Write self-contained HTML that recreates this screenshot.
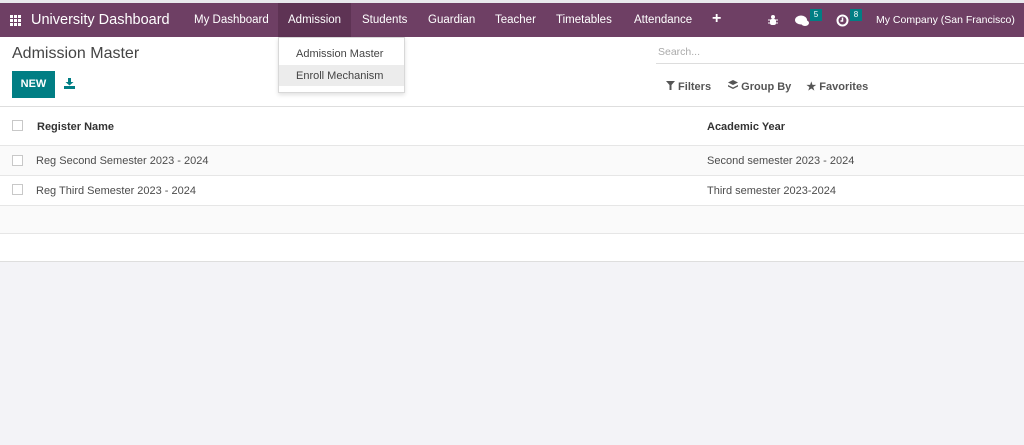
<!DOCTYPE html>
<html><head><meta charset="utf-8"><style>
*{box-sizing:border-box;margin:0;padding:0}
body{width:1024px;height:445px;overflow:hidden;background:#f3f3f7;font-family:"Liberation Sans",sans-serif;color:#4c4c4c;position:relative}
.top{position:absolute;left:0;top:0;width:1024px;height:3px;background:#e8e8ec}
.nav{position:absolute;left:0;top:3px;width:1024px;height:34px;background:#6e3f64;color:#fff;font-size:11.5px}
.nav span{position:absolute;top:10px;white-space:nowrap}
.act{position:absolute;left:278px;top:0;width:73px;height:34px;background:#5e3354}
.white{position:absolute;left:0;top:37px;width:1024px;height:225px;background:#fff;border-bottom:1px solid #dedede}
.abs{position:absolute;white-space:nowrap}
.row{position:absolute;left:0;width:1024px;border-bottom:1px solid #e6e6e6}
.cb{position:absolute;left:12px;width:11px;height:11px;border:1px solid #c8c8c8;background:#fff}
.dd{position:absolute;left:278px;top:37px;width:127px;height:56px;background:#fff;border:1px solid #d8d8d8;box-shadow:0 2px 4px rgba(0,0,0,.12);font-size:11px;color:#444}
.badge{position:absolute;background:#017e84;color:#fff;font-size:8px;width:12px;height:12px;text-align:center;line-height:12px;top:6px}
.t{font-size:11px}
</style></head><body>
<div class="top"></div>
<div class="nav">
<div class="act"></div>
<svg class="abs" style="left:10px;top:12px" width="11" height="11" viewBox="0 0 11 11" fill="#fff"><rect x="0" y="0" width="3" height="3"/><rect x="4" y="0" width="3" height="3"/><rect x="8" y="0" width="3" height="3"/><rect x="0" y="4" width="3" height="3"/><rect x="4" y="4" width="3" height="3"/><rect x="8" y="4" width="3" height="3"/><rect x="0" y="8" width="3" height="3"/><rect x="4" y="8" width="3" height="3"/><rect x="8" y="8" width="3" height="3"/></svg>
<span style="left:31px;top:9px;font-size:14.5px">University Dashboard</span>
<span style="left:194px;top:11px">My Dashboard</span>
<span style="left:288px;top:11px">Admission</span>
<span style="left:362px;top:11px">Students</span>
<span style="left:428px;top:11px">Guardian</span>
<span style="left:495px;top:11px">Teacher</span>
<span style="left:556px;top:11px">Timetables</span>
<span style="left:634px;top:11px">Attendance</span>
<span style="left:712px;top:7px;font-size:16px;font-weight:bold">+</span>
<svg class="abs" style="left:768px;top:12px" width="10" height="11" viewBox="0 0 10 11" fill="#fff"><circle cx="5" cy="2" r="2"/><rect x="2" y="4" width="6" height="6" rx="2"/><path d="M0 5h10M0 8h10" stroke="#fff"/></svg>
<svg class="abs" style="left:795px;top:12px" width="14" height="12" viewBox="0 0 14 12" fill="#fff"><ellipse cx="6" cy="5" rx="6" ry="4.5"/><ellipse cx="10" cy="8" rx="4" ry="3"/></svg>
<div class="badge" style="left:810px">5</div>
<svg class="abs" style="left:836px;top:11px" width="13" height="13" viewBox="0 0 13 13"><circle cx="6.5" cy="6.5" r="5" fill="none" stroke="#fff" stroke-width="2"/><path d="M6.5 3.5v3.5h-2" stroke="#fff" stroke-width="1.5" fill="none"/></svg>
<div class="badge" style="left:850px">8</div>
<span style="left:876px;top:11px;font-size:10.5px">My Company (San Francisco)</span>
</div>
<div class="white">
<div class="abs" style="left:12px;top:8px;font-size:16px;color:#444">Admission Master</div>
<div class="abs" style="left:12px;top:34px;width:43px;height:27px;background:#017e84;color:#fff;font-size:11px;font-weight:bold;text-align:center;line-height:27px">NEW</div>
<svg class="abs" style="left:64px;top:41px" width="11" height="11" viewBox="0 0 11 11" fill="#017e84"><path d="M4 0h3v4h2.5L5.5 7.5 1.5 4H4z"/><rect x="0" y="8" width="11" height="3"/></svg>
<div class="abs" style="left:658px;top:9px;font-size:10.5px;color:#aaa">Search...</div>
<div class="abs" style="left:656px;top:26px;width:368px;height:1px;background:#ddd"></div>
<div class="abs" style="left:666px;top:43px;font-size:11px;font-weight:bold;color:#555">
<svg width="9" height="9" viewBox="0 0 9 9" fill="#555"><path d="M0 0h9L5.5 4v5h-2V4z"/></svg> Filters
<span style="margin-left:14px"><svg width="10" height="10" viewBox="0 0 10 10" fill="#555"><path d="M5 0l5 2.5-5 2.5-5-2.5z"/><path d="M0 5l5 2.5 5-2.5v1.5L5 9 0 6.5z"/></svg> Group By</span>
<span style="margin-left:12px">★ Favorites</span></div>
<div class="row" style="top:69px;height:40px;border-top:1px solid #dedede"><div class="cb" style="top:13px"></div><div class="abs t" style="left:37px;top:14px;font-weight:bold;color:#333">Register Name</div><div class="abs t" style="left:707px;top:14px;font-weight:bold;color:#333">Academic Year</div></div>
<div class="row" style="top:109px;height:30px;background:#fafafa"><div class="cb" style="top:9px"></div><div class="abs t" style="left:36px;top:9px">Reg Second Semester 2023 - 2024</div><div class="abs t" style="left:707px;top:9px">Second semester 2023 - 2024</div></div>
<div class="row" style="top:139px;height:30px"><div class="cb" style="top:8px"></div><div class="abs t" style="left:36px;top:9px">Reg Third Semester 2023 - 2024</div><div class="abs t" style="left:707px;top:9px">Third semester 2023-2024</div></div>
<div class="row" style="top:169px;height:28px;background:#fafafa"></div>
</div>
<div class="dd">
<div class="abs" style="left:17px;top:10px">Admission Master</div>
<div class="abs" style="left:0;top:27px;width:125px;height:21px;background:#ececec"></div>
<div class="abs" style="left:17px;top:32px">Enroll Mechanism</div>
</div>
</body></html>
